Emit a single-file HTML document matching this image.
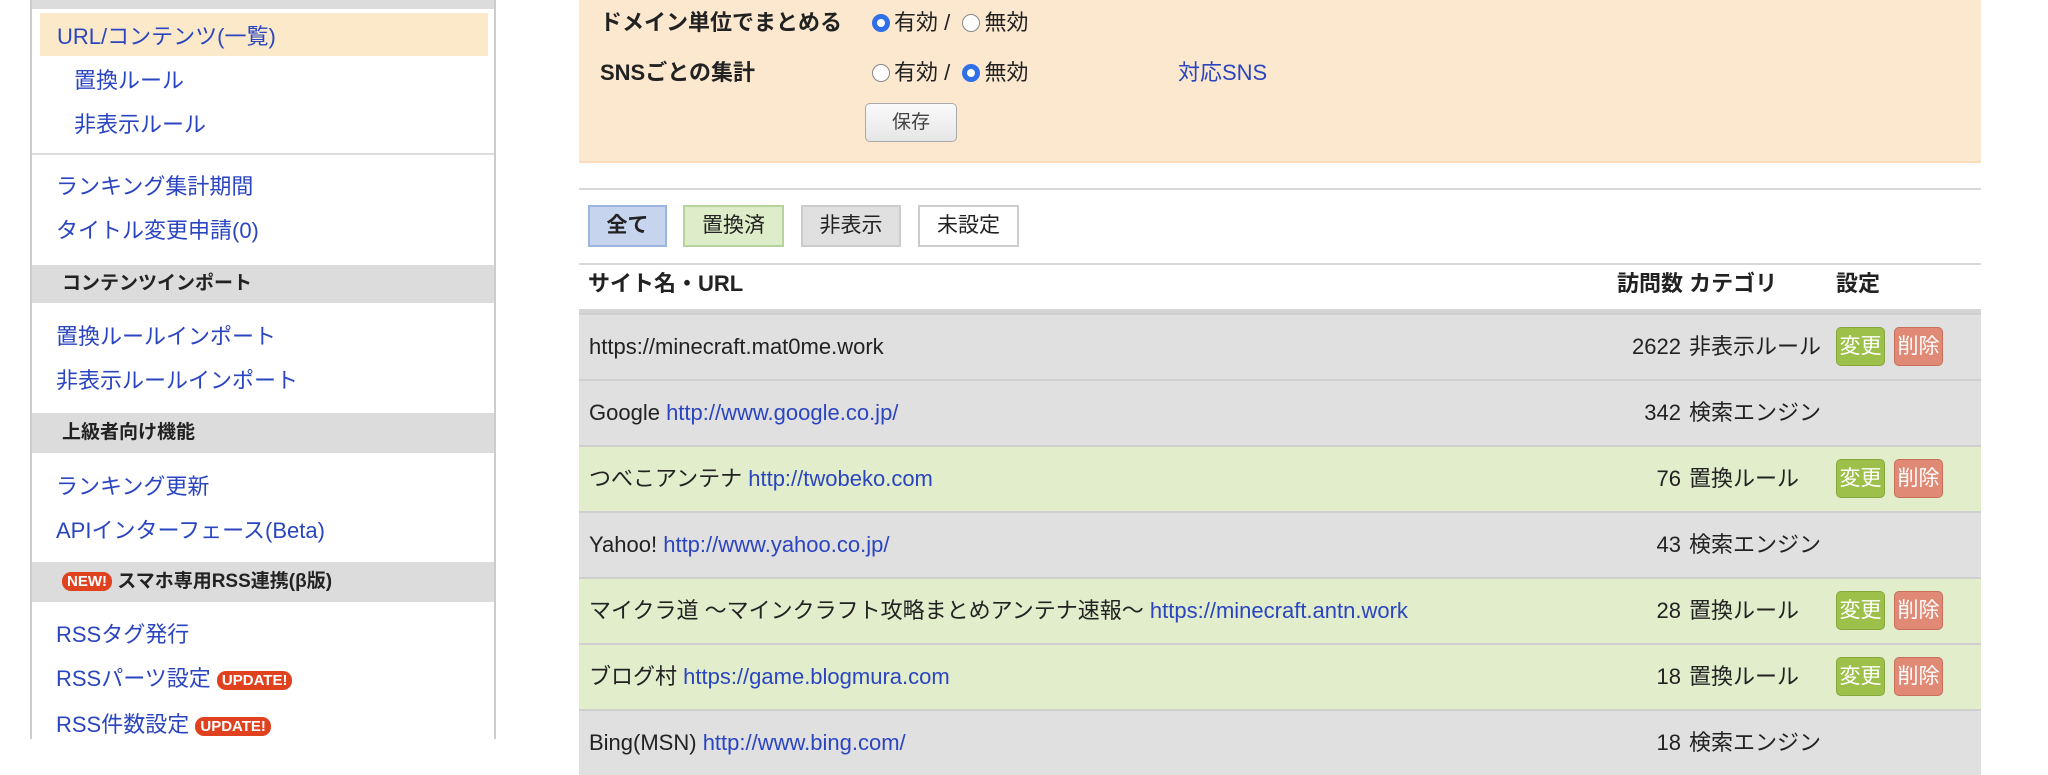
<!DOCTYPE html>
<html><head><meta charset="utf-8"><style>
*{margin:0;padding:0;box-sizing:border-box}
body{width:2048px;height:739px;overflow:hidden;background:#fff;font-family:"Liberation Sans","Noto Sans CJK JP",sans-serif;font-size:22px;color:#222;position:relative}
.a{position:absolute;white-space:nowrap;line-height:30px}
a,.lk{color:#2b45c0;text-decoration:none}
.side{position:absolute;left:30px;top:0;width:466px;height:739px;border-left:2px solid #ccc;border-right:2px solid #ccc;background:#fff}
.hd{position:absolute;left:0;width:462px;background:#dcdcdc;font-weight:bold;font-size:19px;padding-left:30px}
.mi{position:absolute;left:24px;line-height:30px;white-space:nowrap}
.badge{display:inline-block;background:#e0421f;color:#fff;font-weight:bold;font-size:15px;border-radius:9px;padding:0 5px;line-height:19px;vertical-align:middle}
.row{position:absolute;left:579px;width:1402px;height:66px;border-top:2px solid #cfcfcf}
.g{background:#e0e0e0}.gr{background:#e2edcc}
.row .t,.row .n,.row .c{position:absolute;top:0;line-height:64px;white-space:nowrap}
.row .t{left:10px}
.row .n{right:300px;text-align:right}
.row .c{left:1110px}
.b{position:absolute;top:12px;width:49px;height:39px;border-radius:5px;color:#fff;font-size:21px;text-align:center;line-height:37px}
.bg{left:1257px;background:#9dc04a;border:1px solid #86a83a}
.br{left:1315px;background:#e08a76;border:1px solid #c86f5c}
.fb{position:absolute;top:205px;height:42px;border:2px solid #ccc;text-align:center;line-height:38px;font-size:21px}
.rad{display:inline-block;width:18px;height:18px;border-radius:50%;border:1px solid #888;background:#fff;vertical-align:-2px;margin-right:4px}
.on{border:5px solid #2f6fe8}
</style></head><body>
<div class="side">
<div style="position:absolute;left:0;top:0;width:462px;height:9px;background:#dcdcdc"></div>
<div style="position:absolute;left:8px;top:13px;width:448px;height:43px;background:#fbe9c9"></div>
<div class="mi" style="top:22px;color:#2b45c0;left:25px">URL/コンテンツ(一覧)</div>
<div class="mi" style="top:66px;left:42px"><span class="lk">置換ルール</span></div>
<div class="mi" style="top:110px;left:42px"><span class="lk">非表示ルール</span></div>
<div style="position:absolute;left:0;top:153px;width:462px;height:2px;background:#ddd"></div>
<div class="mi" style="top:172px"><span class="lk">ランキング集計期間</span></div>
<div class="mi" style="top:216px"><span class="lk">タイトル変更申請(0)</span></div>
<div class="hd" style="top:265px;height:38px;line-height:38px">コンテンツインポート</div>
<div class="mi" style="top:322px"><span class="lk">置換ルールインポート</span></div>
<div class="mi" style="top:366px"><span class="lk">非表示ルールインポート</span></div>
<div class="hd" style="top:413px;height:40px;line-height:40px">上級者向け機能</div>
<div class="mi" style="top:472px"><span class="lk">ランキング更新</span></div>
<div class="mi" style="top:516px"><span class="lk">APIインターフェース(Beta)</span></div>
<div class="hd" style="top:562px;height:40px;line-height:40px;padding-left:30px"><span class="badge">NEW!</span> スマホ専用RSS連携(β版)</div>
<div class="mi" style="top:620px"><span class="lk">RSSタグ発行</span></div>
<div class="mi" style="top:664px"><span class="lk">RSSパーツ設定</span> <span class="badge">UPDATE!</span></div>
<div class="mi" style="top:710px"><span class="lk">RSS件数設定</span> <span class="badge">UPDATE!</span></div>
</div>

<div class="a" style="left:579px;top:0;width:1402px;height:163px;background:#fbe8cf;border-bottom:2px solid #f8dcbc"></div>
<div class="a" style="left:600px;top:8px;font-weight:bold">ドメイン単位でまとめる</div>
<div class="a" style="left:872px;top:8px"><span class="rad on"></span>有効 / &nbsp;<span class="rad"></span>無効</div>
<div class="a" style="left:600px;top:58px;font-weight:bold">SNSごとの集計</div>
<div class="a" style="left:872px;top:58px"><span class="rad"></span>有効 / &nbsp;<span class="rad on"></span>無効</div>
<div class="a lk" style="left:1178px;top:58px">対応SNS</div>
<div class="a" style="left:865px;top:103px;width:92px;height:39px;border:1px solid #aaa;border-radius:5px;background:linear-gradient(#fafafa,#e6e6e6);text-align:center;line-height:37px;font-size:19px;color:#444">保存</div>

<div class="a" style="left:579px;top:188px;width:1402px;height:2px;background:#d8d8d8"></div>
<div class="fb" style="left:588px;width:79px;background:#c6d4ee;border-color:#9cb4e0;font-weight:bold">全て</div>
<div class="fb" style="left:683px;width:101px;background:#ddedc9;border-color:#b5d39a">置換済</div>
<div class="fb" style="left:801px;width:100px;background:#e0e0e0">非表示</div>
<div class="fb" style="left:918px;width:101px;background:#fff">未設定</div>
<div class="a" style="left:579px;top:263px;width:1402px;height:2px;background:#d8d8d8"></div>
<div class="a" style="left:588px;top:269px;font-weight:bold">サイト名・URL</div>
<div class="a" style="left:1617px;top:269px;font-weight:bold">訪問数 カテゴリ</div>
<div class="a" style="left:1836px;top:269px;font-weight:bold">設定</div>
<div class="a" style="left:579px;top:309px;width:1402px;height:4px;background:#d4d4d4"></div>

<div class="row g" style="top:313px"><div class="t">https://minecraft.mat0me.work</div><div class="n">2622</div><div class="c">非表示ルール</div><div class="b bg">変更</div><div class="b br">削除</div></div>
<div class="row g" style="top:379px"><div class="t">Google <a>http://www.google.co.jp/</a></div><div class="n">342</div><div class="c">検索エンジン</div></div>
<div class="row gr" style="top:445px"><div class="t">つべこアンテナ <a>http://twobeko.com</a></div><div class="n">76</div><div class="c">置換ルール</div><div class="b bg">変更</div><div class="b br">削除</div></div>
<div class="row g" style="top:511px"><div class="t">Yahoo! <a>http://www.yahoo.co.jp/</a></div><div class="n">43</div><div class="c">検索エンジン</div></div>
<div class="row gr" style="top:577px"><div class="t">マイクラ道 〜マインクラフト攻略まとめアンテナ速報〜 <a>https://minecraft.antn.work</a></div><div class="n">28</div><div class="c">置換ルール</div><div class="b bg">変更</div><div class="b br">削除</div></div>
<div class="row gr" style="top:643px"><div class="t">ブログ村 <a>https://game.blogmura.com</a></div><div class="n">18</div><div class="c">置換ルール</div><div class="b bg">変更</div><div class="b br">削除</div></div>
<div class="row g" style="top:709px"><div class="t">Bing(MSN) <a>http://www.bing.com/</a></div><div class="n">18</div><div class="c">検索エンジン</div></div>
</body></html>
